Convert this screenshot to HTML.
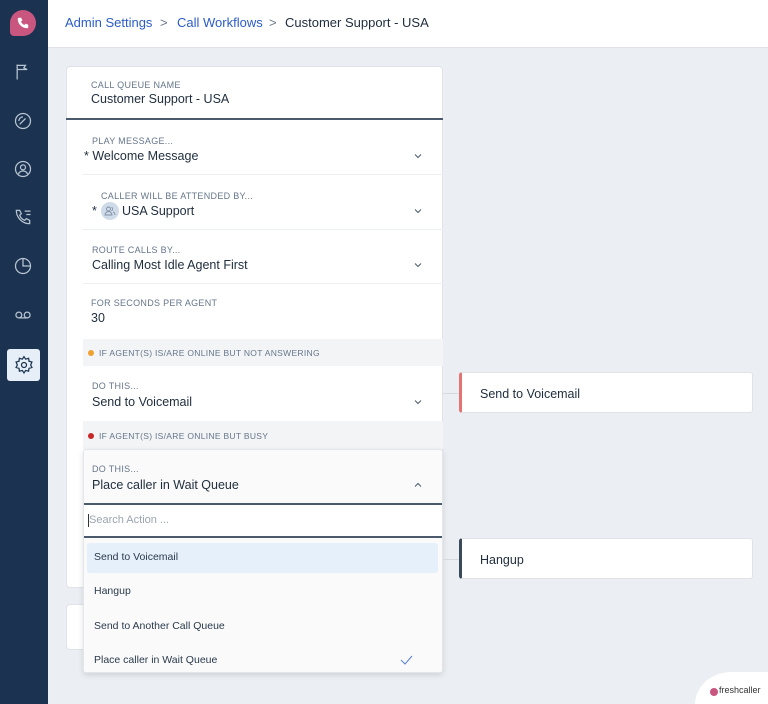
<!DOCTYPE html>
<html style="width:768px;height:704px;overflow:hidden"><head><meta charset="utf-8"><style>
*{box-sizing:border-box;margin:0;padding:0}
body{width:768px;height:704px;overflow:hidden;background:#ebeef2;font-family:"Liberation Sans",sans-serif;color:#1f2d3d;position:relative}
.side{position:absolute;left:0;top:0;width:48px;height:704px;background:#1b3350}
.side svg{position:absolute;left:13px}
.hdr{position:absolute;left:48px;top:0;right:0;height:48px;background:#fff;border-bottom:1px solid #dfe3e8}
.hdr span{position:absolute;top:15px;font-size:13px}
.a{position:absolute}
.lbl{position:absolute;font-size:9px;letter-spacing:.3px;color:#66768a}
.val{position:absolute;font-size:12.5px;color:#1f2d3d}
.hr{position:absolute;height:1px;background:#edf0f3}
.chev{position:absolute;left:414px;width:8px;height:8px}
.opt{position:absolute;left:94px;font-size:10.5px;color:#2a3a4c}
</style></head><body>
<div class="side">
 <div style="position:absolute;left:10px;top:10px;width:26px;height:26px;background:#c9567f;border-radius:13px 13px 13px 4px"></div>
 <svg style="left:16px;top:16px" width="14" height="14" viewBox="0 0 24 24"><path d="M5 3l4 0 2 5-2.5 1.5a11 11 0 0 0 6 6L16 13l5 2v4a2 2 0 0 1-2 2A16 16 0 0 1 3 5a2 2 0 0 1 2-2z" fill="#fff"/></svg>
 <svg style="top:62px" width="20" height="20" viewBox="0 0 24 24" fill="none" stroke="#b8c4d2" stroke-width="1.5"><path d="M5 21V3M5 4h10l-2 3 4 2H5"/></svg>
 <svg style="top:111px" width="20" height="20" viewBox="0 0 24 24" fill="none" stroke="#b8c4d2" stroke-width="1.5"><circle cx="12" cy="12" r="9"/><path d="M8 16l7-7M7 12a5 5 0 0 1 5-5"/></svg>
 <svg style="top:159px" width="20" height="20" viewBox="0 0 24 24" fill="none" stroke="#b8c4d2" stroke-width="1.5"><circle cx="12" cy="12" r="9"/><circle cx="12" cy="10" r="3"/><path d="M6.5 18a6 6 0 0 1 11 0"/></svg>
 <svg style="top:207px" width="20" height="20" viewBox="0 0 24 24" fill="none" stroke="#b8c4d2" stroke-width="1.5"><path d="M4 4h4l2 4-2 2a10 10 0 0 0 6 6l2-2 4 2v4A16 16 0 0 1 4 4zM14 5h7M16 9h5"/></svg>
 <svg style="top:256px" width="20" height="20" viewBox="0 0 24 24" fill="none" stroke="#b8c4d2" stroke-width="1.5"><circle cx="12" cy="12" r="9"/><path d="M12 3v9h9"/></svg>
 <svg style="top:305px" width="20" height="20" viewBox="0 0 24 24" fill="none" stroke="#b8c4d2" stroke-width="1.5"><circle cx="7" cy="12" r="3.5"/><circle cx="17" cy="12" r="3.5"/><path d="M7 15.5h10"/></svg>
 <div style="position:absolute;left:7px;top:349px;width:33px;height:32px;background:#e6eef8;border-radius:3px"></div>
 <svg style="top:355px;left:14px" width="20" height="20" viewBox="0 0 24 24" fill="none" stroke="#1b3350" stroke-width="1.5"><circle cx="12" cy="12" r="3"/><path d="M12 2l2 3 3.5-1 .5 3.5 3.5 1-1.5 3.5 1.5 3-3.5 1-.5 3.5-3.5-1-2 3-2-3-3.5 1-.5-3.5-3.5-1L4 12 2.5 8.5 6 7.5 6.5 4l3.5 1z"/></svg>
</div>
<div class="hdr">
 <span style="left:17px;color:#2c5cc5">Admin Settings</span>
 <span style="left:112px;color:#6b7a8c">&gt;</span>
 <span style="left:129px;color:#2c5cc5">Call Workflows</span>
 <span style="left:221px;color:#6b7a8c">&gt;</span>
 <span style="left:237px;color:#1f2d3d">Customer Support - USA</span>
</div>

<div class="a" style="left:66px;top:66px;width:377px;height:522px;background:#fff;border:1px solid #dfe3e8;border-radius:4px"></div>
<div class="a" style="left:66px;top:604px;width:377px;height:46px;background:#fff;border:1px solid #dfe3e8;border-radius:4px"></div>
<div class="lbl" style="left:91px;top:80px">CALL QUEUE NAME</div>
<div class="val" style="left:91px;top:92px">Customer Support - USA</div>
<div class="a" style="left:66px;top:118px;width:377px;height:2px;background:#4a5a6c"></div>

<div class="lbl" style="left:92px;top:136px">PLAY MESSAGE...</div>
<div class="val" style="left:84px;top:149px">* Welcome Message</div>
<svg class="chev" style="top:152px" viewBox="0 0 8 8"><path d="M1 2.5l3 3 3-3" fill="none" stroke="#4a5a6c"/></svg>
<div class="hr" style="left:83px;top:174px;width:360px"></div>

<div class="lbl" style="left:101px;top:191px">CALLER WILL BE ATTENDED BY...</div>
<div class="val" style="left:92px;top:204px">*</div>
<div class="a" style="left:101px;top:202px;width:18px;height:18px;border-radius:9px;background:#cfdbe8"></div>
<svg class="a" style="left:104px;top:206px" width="12" height="10" viewBox="0 0 12 10" fill="none" stroke="#7f90a4" stroke-width=".9"><circle cx="4.5" cy="3" r="2"/><path d="M1 9a3.5 3.5 0 0 1 7 0zM7.5 1.2a2 2 0 0 1 0 3.6M9 6a3 3 0 0 1 2 3"/></svg>
<div class="val" style="left:122px;top:204px">USA Support</div>
<svg class="chev" style="top:207px" viewBox="0 0 8 8"><path d="M1 2.5l3 3 3-3" fill="none" stroke="#4a5a6c"/></svg>
<div class="hr" style="left:83px;top:229px;width:360px"></div>

<div class="lbl" style="left:92px;top:245px">ROUTE CALLS BY...</div>
<div class="val" style="left:92px;top:258px">Calling Most Idle Agent First</div>
<svg class="chev" style="top:261px" viewBox="0 0 8 8"><path d="M1 2.5l3 3 3-3" fill="none" stroke="#4a5a6c"/></svg>
<div class="hr" style="left:83px;top:283px;width:360px"></div>

<div class="lbl" style="left:91px;top:298px">FOR SECONDS PER AGENT</div>
<div class="val" style="left:91px;top:311px">30</div>

<div class="a" style="left:83px;top:339px;width:360px;height:27px;background:#f2f4f6"></div>
<div class="a" style="left:88px;top:350px;width:6px;height:6px;border-radius:3px;background:#f0a030"></div>
<div class="lbl" style="left:99px;top:348px;font-size:8.5px">IF AGENT(S) IS/ARE ONLINE BUT NOT ANSWERING</div>

<div class="lbl" style="left:92px;top:381px">DO THIS...</div>
<div class="val" style="left:92px;top:395px">Send to Voicemail</div>
<svg class="chev" style="top:398px" viewBox="0 0 8 8"><path d="M1 2.5l3 3 3-3" fill="none" stroke="#4a5a6c"/></svg>

<div class="a" style="left:83px;top:421px;width:360px;height:28px;background:#f2f4f6"></div>
<div class="a" style="left:88px;top:433px;width:6px;height:6px;border-radius:3px;background:#c62828"></div>
<div class="lbl" style="left:99px;top:431px;font-size:8.5px">IF AGENT(S) IS/ARE ONLINE BUT BUSY</div>

<div class="a" style="left:83px;top:449px;width:360px;height:224px;background:#fafafa;border:1px solid #e3e6ea;border-radius:3px;box-shadow:0 2px 6px rgba(0,0,0,.12)"></div>
<div class="lbl" style="left:92px;top:464px">DO THIS...</div>
<div class="val" style="left:92px;top:478px">Place caller in Wait Queue</div>
<svg class="chev" style="top:481px" viewBox="0 0 8 8"><path d="M1 5.5l3-3 3 3" fill="none" stroke="#4a5a6c"/></svg>
<div class="a" style="left:84px;top:503px;width:358px;height:35px;background:#fff;border-top:2px solid #4a5a6c;border-bottom:2px solid #4a5a6c"></div>
<div class="a" style="left:88px;top:514px;width:1px;height:13px;background:#333"></div>
<div class="a" style="left:89px;top:514px;font-size:11px;color:#9aa5b1">Search Action ...</div>
<div class="a" style="left:87px;top:543px;width:351px;height:30px;background:#e6f0fb;border-radius:3px"></div>
<div class="opt" style="top:551px">Send to Voicemail</div>
<div class="opt" style="top:585px">Hangup</div>
<div class="opt" style="top:620px">Send to Another Call Queue</div>
<div class="opt" style="top:654px">Place caller in Wait Queue</div>
<svg class="a" style="left:400px;top:655px" width="13" height="10" viewBox="0 0 13 10"><path d="M1 5l4 4 7-8" fill="none" stroke="#5a7fd0" stroke-width="1"/></svg>

<div class="a" style="left:443px;top:393px;width:16px;height:1px;background:#d5dae0"></div>
<div class="a" style="left:443px;top:559px;width:16px;height:1px;background:#d5dae0"></div>
<div class="a" style="left:459px;top:372px;width:294px;height:41px;background:#fff;border:1px solid #dfe3e8;border-left:3px solid #e57373;border-radius:3px"></div>
<div class="a" style="left:480px;top:387px;font-size:12.5px">Send to Voicemail</div>
<div class="a" style="left:459px;top:538px;width:294px;height:41px;background:#fff;border:1px solid #dfe3e8;border-left:3px solid #3a4a5c;border-radius:3px"></div>
<div class="a" style="left:480px;top:553px;font-size:12.5px">Hangup</div>

<div class="a" style="left:695px;top:672px;width:73px;height:32px;background:#fff;border-top-left-radius:55px 48px"></div>
<div class="a" style="left:710px;top:688px;width:8px;height:8px;border-radius:4px;background:#c9567f"></div>
<div class="a" style="left:719px;top:685px;font-size:9px;line-height:11px;color:#333">freshcaller</div>
</body></html>
